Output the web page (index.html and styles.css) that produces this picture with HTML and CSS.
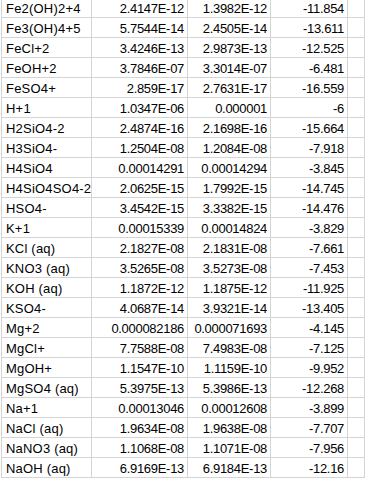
FILE: index.html
```html
<!DOCTYPE html>
<html>
<head>
<meta charset="utf-8">
<link rel="stylesheet" href="styles.css">
</head>
<body>
<div class="sheet">
<div class="row"><div class="c name">Fe2(OH)2+4</div><div class="c num">2.4147E-12</div><div class="c num">1.3982E-12</div><div class="c num">-11.854</div><div class="c"></div></div>
<div class="row"><div class="c name">Fe3(OH)4+5</div><div class="c num">5.7544E-14</div><div class="c num">2.4505E-14</div><div class="c num">-13.611</div><div class="c"></div></div>
<div class="row"><div class="c name">FeCl+2</div><div class="c num">3.4246E-13</div><div class="c num">2.9873E-13</div><div class="c num">-12.525</div><div class="c"></div></div>
<div class="row"><div class="c name">FeOH+2</div><div class="c num">3.7846E-07</div><div class="c num">3.3014E-07</div><div class="c num">-6.481</div><div class="c"></div></div>
<div class="row"><div class="c name">FeSO4+</div><div class="c num">2.859E-17</div><div class="c num">2.7631E-17</div><div class="c num">-16.559</div><div class="c"></div></div>
<div class="row"><div class="c name">H+1</div><div class="c num">1.0347E-06</div><div class="c num">0.000001</div><div class="c num">-6</div><div class="c"></div></div>
<div class="row"><div class="c name">H2SiO4-2</div><div class="c num">2.4874E-16</div><div class="c num">2.1698E-16</div><div class="c num">-15.664</div><div class="c"></div></div>
<div class="row"><div class="c name">H3SiO4-</div><div class="c num">1.2504E-08</div><div class="c num">1.2084E-08</div><div class="c num">-7.918</div><div class="c"></div></div>
<div class="row"><div class="c name">H4SiO4</div><div class="c num">0.00014291</div><div class="c num">0.00014294</div><div class="c num">-3.845</div><div class="c"></div></div>
<div class="row"><div class="c name">H4SiO4SO4-2</div><div class="c num">2.0625E-15</div><div class="c num">1.7992E-15</div><div class="c num">-14.745</div><div class="c"></div></div>
<div class="row"><div class="c name">HSO4-</div><div class="c num">3.4542E-15</div><div class="c num">3.3382E-15</div><div class="c num">-14.476</div><div class="c"></div></div>
<div class="row"><div class="c name">K+1</div><div class="c num">0.00015339</div><div class="c num">0.00014824</div><div class="c num">-3.829</div><div class="c"></div></div>
<div class="row"><div class="c name">KCl (aq)</div><div class="c num">2.1827E-08</div><div class="c num">2.1831E-08</div><div class="c num">-7.661</div><div class="c"></div></div>
<div class="row"><div class="c name">KNO3 (aq)</div><div class="c num">3.5265E-08</div><div class="c num">3.5273E-08</div><div class="c num">-7.453</div><div class="c"></div></div>
<div class="row"><div class="c name">KOH (aq)</div><div class="c num">1.1872E-12</div><div class="c num">1.1875E-12</div><div class="c num">-11.925</div><div class="c"></div></div>
<div class="row"><div class="c name">KSO4-</div><div class="c num">4.0687E-14</div><div class="c num">3.9321E-14</div><div class="c num">-13.405</div><div class="c"></div></div>
<div class="row"><div class="c name">Mg+2</div><div class="c num">0.000082186</div><div class="c num">0.000071693</div><div class="c num">-4.145</div><div class="c"></div></div>
<div class="row"><div class="c name">MgCl+</div><div class="c num">7.7588E-08</div><div class="c num">7.4983E-08</div><div class="c num">-7.125</div><div class="c"></div></div>
<div class="row"><div class="c name">MgOH+</div><div class="c num">1.1547E-10</div><div class="c num">1.1159E-10</div><div class="c num">-9.952</div><div class="c"></div></div>
<div class="row"><div class="c name">MgSO4 (aq)</div><div class="c num">5.3975E-13</div><div class="c num">5.3986E-13</div><div class="c num">-12.268</div><div class="c"></div></div>
<div class="row"><div class="c name">Na+1</div><div class="c num">0.00013046</div><div class="c num">0.00012608</div><div class="c num">-3.899</div><div class="c"></div></div>
<div class="row"><div class="c name">NaCl (aq)</div><div class="c num">1.9634E-08</div><div class="c num">1.9638E-08</div><div class="c num">-7.707</div><div class="c"></div></div>
<div class="row"><div class="c name">NaNO3 (aq)</div><div class="c num">1.1068E-08</div><div class="c num">1.1071E-08</div><div class="c num">-7.956</div><div class="c"></div></div>
<div class="row"><div class="c name">NaOH (aq)</div><div class="c num">6.9169E-13</div><div class="c num">6.9184E-13</div><div class="c num">-12.16</div><div class="c"></div></div>
</div>
</body>
</html>
```
FILE: styles.css
```css
html, body {
  margin: 0;
  padding: 0;
  background: #ffffff;
  overflow: hidden;
}
.sheet {
  margin-top: -2px;
  margin-left: 1px;
  border-left: 1px solid #d4d4d4;
  font-family: "Liberation Sans", Arial, sans-serif;
  font-size: 13px;
  color: #000000;
}
.row {
  display: grid;
  grid-template-columns: 90px 96px 83px 77px 1fr;
  height: 20px;
}
.c {
  box-sizing: border-box;
  height: 20px;
  border-right: 1px solid #d4d4d4;
  border-bottom: 1px solid #d4d4d4;
  padding-top: 3px;
  line-height: 16px;
  white-space: nowrap;
  overflow: hidden;
}
.name {
  padding-left: 4px;
  letter-spacing: 0.2px;
}
.num {
  text-align: right;
  padding-right: 3px;
  letter-spacing: -0.3px;
}
```
